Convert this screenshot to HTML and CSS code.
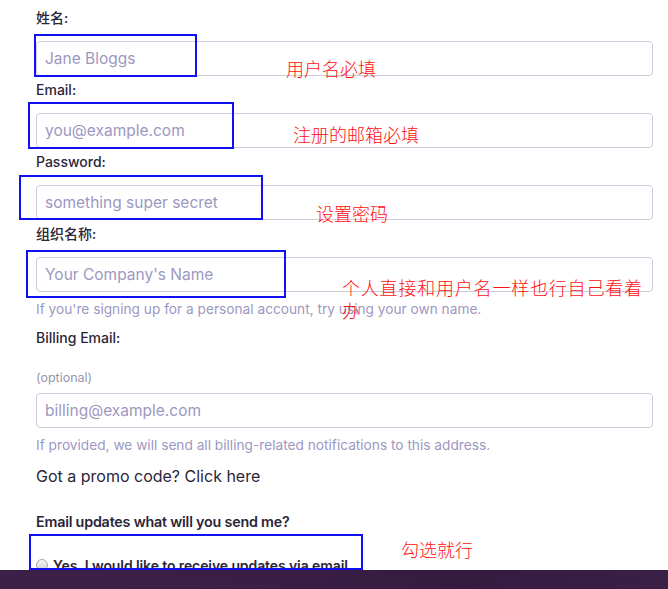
FILE: index.html
```html
<!DOCTYPE html>
<html lang="zh-CN">
<head>
<meta charset="utf-8">
<title>Sign up</title>
<link rel="stylesheet" href="styles.css">
</head>
<body>
<div class="page">
  <form class="form">
    <div class="field">
      <label class="label">姓名:</label>
      <div class="input">Jane Bloggs</div>
    </div>
    <div class="field">
      <label class="label">Email:</label>
      <div class="input">you@example.com</div>
    </div>
    <div class="field">
      <label class="label">Password:</label>
      <div class="input">something super secret</div>
    </div>
    <div class="field">
      <label class="label">组织名称:</label>
      <div class="input">Your Company's Name</div>
      <p class="help">If you're signing up for a personal account, try using your own name.</p>
    </div>
    <div class="field billing">
      <label class="label">Billing Email:</label>
      <span class="optional">(optional)</span>
      <div class="input">billing@example.com</div>
      <p class="help">If provided, we will send all billing-related notifications to this address.</p>
    </div>
    <p class="promo">Got a promo code? Click here</p>
    <p class="updates-label">Email updates what will you send me?</p>
    <div class="radio-row">
      <span class="radio"></span>
      <span class="radio-text">Yes, I would like to receive updates via email</span>
    </div>
  </form>

  <div class="box box-1"></div>
  <div class="box box-2"></div>
  <div class="box box-3"></div>
  <div class="box box-4"></div>
  <div class="box box-5"></div>

  <div class="note note-1">用户名必填</div>
  <div class="note note-2">注册的邮箱必填</div>
  <div class="note note-3">设置密码</div>
  <div class="note note-4">个人直接和用户名一样也行自己看着<br>办</div>
  <div class="note note-5">勾选就行</div>
</div>
<footer class="footer"></footer>
</body>
</html>
```

FILE: styles.css
```css
html, body {
  margin: 0;
  padding: 0;
  background: #ffffff;
}

body {
  width: 668px;
  height: 589px;
  overflow: hidden;
  font-family: "Inter", "Noto Sans", "Noto Sans CJK SC", sans-serif;
}

.page {
  position: relative;
  height: 570px;
  overflow: hidden;
}

.form {
  display: flex;
  flex-direction: column;
  padding: 8px 15px 0 36px;
}

.field {
  display: flex;
  flex-direction: column;
  margin-bottom: 4px;
}

.label {
  display: block;
  height: 20px;
  line-height: 20px;
  font-size: 14px;
  font-weight: 500;
  color: #2b2538;
  margin-bottom: 13px;
}

.input {
  box-sizing: border-box;
  height: 35px;
  border: 1px solid #cfcbdc;
  border-radius: 4px;
  padding: 0 8px;
  line-height: 33px;
  font-size: 15.5px;
  color: #9c98c1;
}

.help {
  margin: 7px 0 0;
  height: 20px;
  line-height: 20px;
  font-size: 13.7px;
  color: #9c98c1;
}

.billing {
  margin-top: 5px;
}

.billing .label {
  margin-bottom: 20px;
}

.optional {
  display: block;
  height: 20px;
  line-height: 20px;
  font-size: 12.5px;
  color: #9a95ad;
  margin-bottom: 5px;
}

.promo {
  margin: 7px 0 0;
  height: 20px;
  line-height: 20px;
  font-size: 16px;
  color: #2b2538;
}

.updates-label {
  margin: 26px 0 0;
  height: 20px;
  line-height: 20px;
  font-size: 14.3px;
  font-weight: 600;
  letter-spacing: -0.2px;
  color: #2b2538;
}

.radio-row {
  display: flex;
  align-items: center;
  gap: 5px;
  margin-top: 23px;
  height: 20px;
}

.radio {
  box-sizing: border-box;
  width: 12px;
  height: 12px;
  border-radius: 50%;
  border: 1px solid #a9a9a9;
  background: linear-gradient(#f4f4f4, #d6d6d6);
}

.radio-text {
  font-size: 14px;
  font-weight: 600;
  letter-spacing: -0.1px;
  color: #2b2538;
}

.box {
  position: absolute;
  box-sizing: border-box;
  border: 2px solid #1010f0;
}

.box-1 { left: 34px; top: 34px; width: 163px; height: 43px; }
.box-2 { left: 28px; top: 102px; width: 206px; height: 47px; }
.box-3 { left: 19px; top: 175px; width: 244px; height: 45px; }
.box-4 { left: 26px; top: 250px; width: 260px; height: 48px; }
.box-5 { left: 29px; top: 534px; width: 334px; height: 36px; }

.note {
  position: absolute;
  font-family: "Noto Sans CJK SC", sans-serif;
  font-size: 18px;
  font-weight: 300;
  line-height: 23px;
  color: #ff1010;
  white-space: nowrap;
}

.note-1 { left: 286px; top: 57px; }
.note-2 { left: 293px; top: 123px; }
.note-3 { left: 316px; top: 202px; }
.note-4 { left: 342px; top: 276px; letter-spacing: 0.8px; }
.note-5 { left: 401px; top: 538px; }

.footer {
  height: 19px;
  background: linear-gradient(100deg, #3d2049 0%, #3a1e45 40%, #351b40 70%, #3a2046 100%);
}
```
